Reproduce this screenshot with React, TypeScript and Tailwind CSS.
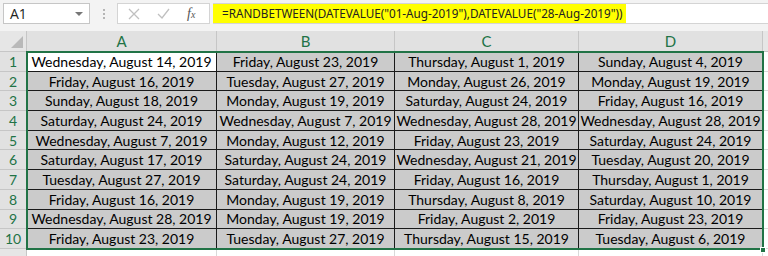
import React from "react";

const data: string[][] = [
  ["Wednesday, August 14, 2019", "Friday, August 23, 2019", "Thursday, August 1, 2019", "Sunday, August 4, 2019"],
  ["Friday, August 16, 2019", "Tuesday, August 27, 2019", "Monday, August 26, 2019", "Monday, August 19, 2019"],
  ["Sunday, August 18, 2019", "Monday, August 19, 2019", "Saturday, August 24, 2019", "Friday, August 16, 2019"],
  ["Saturday, August 24, 2019", "Wednesday, August 7, 2019", "Wednesday, August 28, 2019", "Wednesday, August 28, 2019"],
  ["Wednesday, August 7, 2019", "Monday, August 12, 2019", "Friday, August 23, 2019", "Saturday, August 24, 2019"],
  ["Saturday, August 17, 2019", "Saturday, August 24, 2019", "Wednesday, August 21, 2019", "Tuesday, August 20, 2019"],
  ["Tuesday, August 27, 2019", "Saturday, August 24, 2019", "Friday, August 16, 2019", "Thursday, August 1, 2019"],
  ["Friday, August 16, 2019", "Monday, August 19, 2019", "Thursday, August 8, 2019", "Saturday, August 10, 2019"],
  ["Wednesday, August 28, 2019", "Monday, August 19, 2019", "Friday, August 2, 2019", "Friday, August 23, 2019"],
  ["Friday, August 23, 2019", "Tuesday, August 27, 2019", "Thursday, August 15, 2019", "Tuesday, August 6, 2019"],
];

const cols = ["A", "B", "C", "D"];

export default function App() {
  return (
    <div className="w-[768px] h-[256px] overflow-hidden bg-white font-['Lato',sans-serif] text-black">
      {/* Formula bar */}
      <div className="h-[31px] bg-[#f3f3f3] flex items-start pt-[3px]">
        <div className="ml-[3px] w-[87px] h-[21px] bg-white border border-[#c6c6c6] flex items-center justify-between pl-[6px] pr-[6px]">
          <span className="text-[14px] text-[#222] font-['Open_Sans',sans-serif]">A1</span>
          <span className="w-0 h-0 border-l-[4px] border-r-[4px] border-t-[4px] border-l-transparent border-r-transparent border-t-[#777]" />
        </div>
        <div className="w-[27px] h-[21px] flex flex-col items-center justify-center gap-[2px]">
          <span className="w-[2px] h-[2px] bg-[#b5b5b5]" />
          <span className="w-[2px] h-[2px] bg-[#b5b5b5]" />
          <span className="w-[2px] h-[2px] bg-[#b5b5b5]" />
        </div>
        <div className="w-[93px] h-[21px] bg-white border border-[#d4d4d4] flex items-center">
          <svg className="ml-[10px]" width="12" height="12" viewBox="0 0 12 12">
            <path d="M1 1 L11 11 M11 1 L1 11" stroke="#c0c0c0" strokeWidth="1.3" fill="none" />
          </svg>
          <svg className="ml-[17px]" width="13" height="11" viewBox="0 0 13 11">
            <path d="M1 6 L5 10 L12 1" stroke="#c0c0c0" strokeWidth="1.3" fill="none" />
          </svg>
          <span className="ml-[17px] text-[14px] italic text-[#555] font-['Liberation_Serif',serif] leading-none">
            f<span className="text-[10px]">x</span>
          </span>
        </div>
        <div className="ml-[3px] flex-1 h-[21px] bg-white border-y border-[#d4d4d4] flex items-stretch">
          <div className="w-[413px] bg-[#ffff00] flex items-center pl-[9px] text-[11.7px] text-[#222] font-['Noto_Sans',sans-serif] whitespace-nowrap">
            =RANDBETWEEN(DATEVALUE("01-Aug-2019"),DATEVALUE("28-Aug-2019"))
          </div>
        </div>
      </div>

      {/* Grid */}
      <div className="relative">
        <div className="grid grid-cols-[27px_190px_178px_184px_184px_1fr]">
          {/* header row */}
          <div className="h-[21px] bg-[#e6e6e6] border-r border-b border-[#c6c6c6] flex items-end justify-end pr-[3px] pb-[3px]">
            <svg width="12" height="12" viewBox="0 0 12 12">
              <path d="M12 0 L12 12 L0 12 Z" fill="#b9b9b9" />
            </svg>
          </div>
          {cols.map((c) => (
            <div key={c} className="h-[21px] bg-[#e1e1e1] border-r border-b border-[#c6c6c6] flex items-center justify-center text-[15px] text-[#217346] font-['Lato',sans-serif]">
              {c}
            </div>
          ))}
          <div className="h-[21px] bg-[#e6e6e6] border-b border-[#c6c6c6]" />

          {data.map((row, i) => (
            <React.Fragment key={i}>
              <div className="h-[19.7px] bg-[#e1e1e1] border-r border-b border-[#c6c6c6] flex items-center justify-center text-[14px] text-[#217346]">
                {i + 1}
              </div>
              {row.map((cell, j) => (
                <div
                  key={j}
                  className={`h-[19.7px] border-b border-r border-[#1a1a1a] flex items-center justify-center text-[14px] whitespace-nowrap overflow-hidden ${
                    i === 0 && j === 0 ? "bg-white" : "bg-[#cbcbcb]"
                  }`}
                >
                  {cell}
                </div>
              ))}
              <div className="h-[19.7px] border-b border-[#d9d9d9]" />
            </React.Fragment>
          ))}
          <div className="h-[20px] bg-[#e6e6e6] border-r border-[#c6c6c6] flex items-start justify-center text-[14px] text-[#555] pt-[3px]">
            11
          </div>
          <div className="h-[20px] border-r border-[#d9d9d9]" />
          <div className="h-[20px] border-r border-[#d9d9d9]" />
          <div className="h-[20px] border-r border-[#d9d9d9]" />
          <div className="h-[20px] border-r border-[#d9d9d9]" />
          <div className="h-[20px]" />
        </div>
        {/* selection outline */}
        <div className="absolute left-[26px] top-[20px] w-[738px] h-[199px] border-2 border-[#217346] pointer-events-none" />
        <div className="absolute left-[760px] top-[216px] w-[6px] h-[6px] bg-[#217346] border border-white pointer-events-none" />
      </div>
    </div>
  );
}
